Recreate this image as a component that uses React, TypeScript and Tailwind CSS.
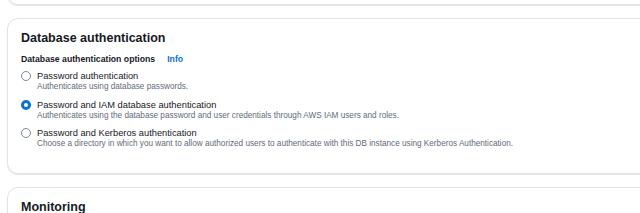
import React from "react";

type Option = {
    id: string;
    label: string;
    description: string;
};

const options: Option[] = [
    {
        id: "password",
        label: "Password authentication",
        description: "Authenticates using database passwords.",
    },
    {
        id: "password-iam",
        label: "Password and IAM database authentication",
        description:
            "Authenticates using the database password and user credentials through AWS IAM users and roles.",
    },
    {
        id: "password-kerberos",
        label: "Password and Kerberos authentication",
        description:
            "Choose a directory in which you want to allow authorized users to authenticate with this DB instance using Kerberos Authentication.",
    },
];

function Radio({ checked }: { checked: boolean }) {
    return (
        <span
            className={`mt-[1px] block h-[10px] w-[10px] shrink-0 rounded-full bg-white ${
                checked ? "border-[3px] border-[#0972d3]" : "border-[1.5px] border-[#7d8998]"
            }`}
        />
    );
}

export default function App() {
    const selected = "password-iam";

    return (
        <div className="h-[213px] w-[640px] overflow-hidden bg-white font-['Liberation_Sans',Arial,sans-serif] text-[#16191f]">
            <div className="flex w-[720px] flex-col gap-[13px] pl-[7px]">
                {/* previous section, only its bottom edge shows */}
                <div className="-mt-[36px] h-[41px] rounded-[11px] border border-[#e2e3e5] shadow-[0_1px_1px_rgba(0,28,36,0.12)]" />

                <section className="rounded-[11px] border border-[#e2e3e5] px-[13px] pt-[11px] pb-[23px] shadow-[0_1px_1px_rgba(0,28,36,0.12)]">
                    <h2 className="text-[12.5px] font-bold leading-[16px]">Database authentication</h2>

                    <div className="mt-[7px] flex items-baseline gap-[12px]">
                        <span className="text-[8.7px] font-bold leading-[12px]">Database authentication options</span>
                        <span className="text-[8.7px] font-bold leading-[12px] text-[#0972d3]">Info</span>
                    </div>

                    <div className="mt-[5px] flex flex-col gap-[6px]">
                        {options.map((o) => (
                            <label key={o.id} className="flex items-start gap-[6px]">
                                <Radio checked={o.id === selected} />
                                <span className="flex flex-col">
                                    <span className="text-[9.3px] leading-[12px] text-[#16191f]">{o.label}</span>
                                    <span className="text-[8.2px] leading-[10.5px] text-[#5f6b7a]">{o.description}</span>
                                </span>
                            </label>
                        ))}
                    </div>
                </section>

                <section className="rounded-[11px] border border-[#e2e3e5] px-[13px] pt-[11px] pb-[20px] shadow-[0_1px_1px_rgba(0,28,36,0.12)]">
                    <h2 className="text-[12.5px] font-bold leading-[16px]">Monitoring</h2>
                </section>
            </div>
        </div>
    );
}
